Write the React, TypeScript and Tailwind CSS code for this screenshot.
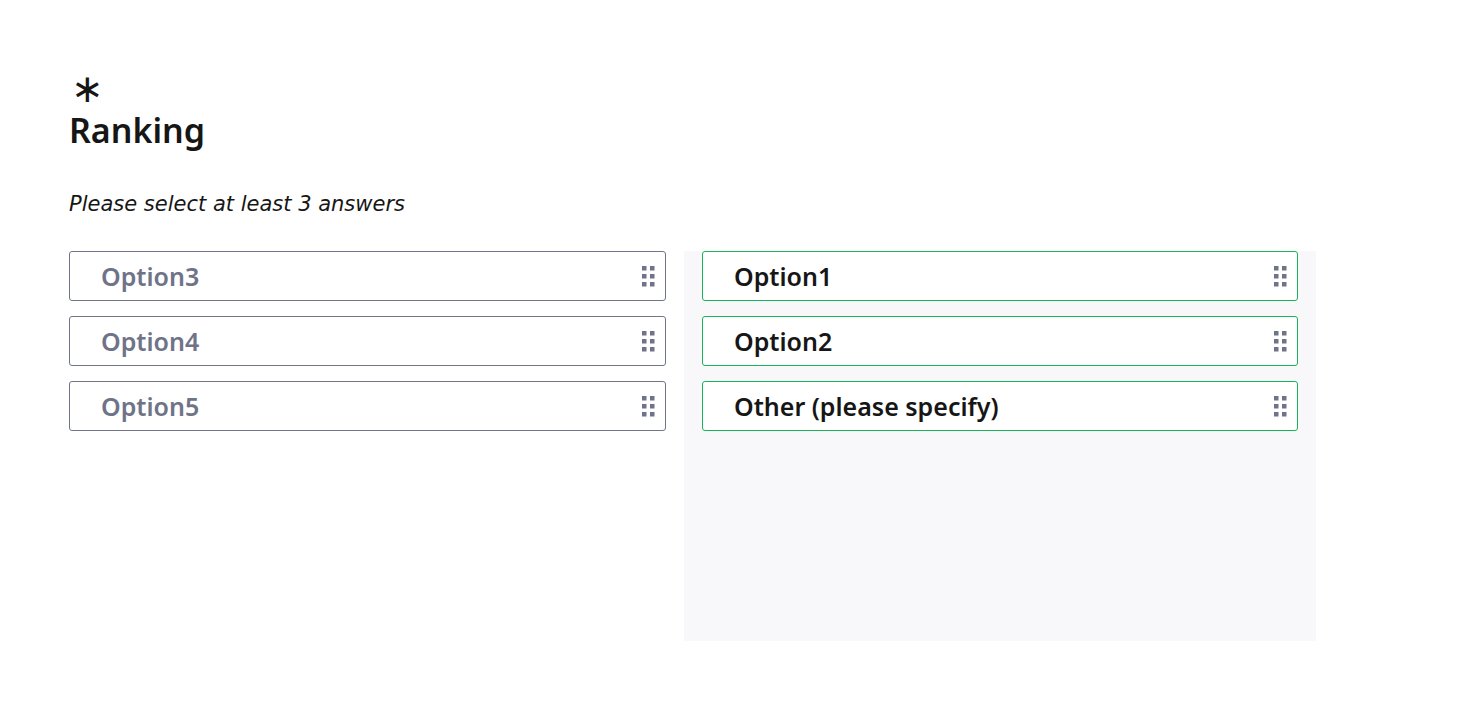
import React from "react";

type ItemProps = {
  label: string;
  ranked?: boolean;
};

const DragHandle: React.FC = () => (
  <svg width="13" height="21" viewBox="0 0 13 21" className="shrink-0">
    {[0, 8, 16].map((y) =>
      [0, 8].map((x) => (
        <rect key={`${x}-${y}`} x={x} y={y} width="4.5" height="4.5" fill="#6f7388" />
      ))
    )}
  </svg>
);

const RankItem: React.FC<ItemProps> = ({ label, ranked }) => (
  <div
    className={`flex h-[50px] items-center justify-between rounded-[3px] border bg-white pl-[31px] pr-[10px] ${
      ranked ? "border-[#19b35b] text-[#161616]" : "border-[#70758a] text-[#6f7388]"
    }`}
  >
    <span className="text-[25px] font-semibold leading-none">{label}</span>
    <DragHandle />
  </div>
);

const App: React.FC = () => {
  const unranked = ["Option3", "Option4", "Option5"];
  const ranked = ["Option1", "Option2", "Other (please specify)"];

  return (
    <div
      className="min-h-screen bg-white pl-[69px] pt-[72px] text-[#161616]"
      style={{ fontFamily: '"Noto Sans", "Open Sans", sans-serif' }}
    >
      <div className="h-[36px] pl-[2px] font-['DejaVu_Sans',sans-serif] text-[39px] font-normal leading-[34px] text-[#161616]">
        ∗
      </div>
      <h1 className="text-[34px] font-semibold leading-[44px]">Ranking</h1>
      <p className="mt-[38px] font-['DejaVu_Sans',sans-serif] text-[21px] italic leading-[28px]">
        Please select at least 3 answers
      </p>

      <div className="mt-[33px] flex gap-[18px]">
        <div className="flex w-[597px] flex-col gap-[15px]">
          {unranked.map((o) => (
            <RankItem key={o} label={o} />
          ))}
        </div>
        <div className="flex h-[390px] w-[632px] flex-col gap-[15px] bg-[#f8f8fa] px-[18px]">
          {ranked.map((o) => (
            <RankItem key={o} label={o} ranked />
          ))}
        </div>
      </div>
    </div>
  );
};

export default App;
